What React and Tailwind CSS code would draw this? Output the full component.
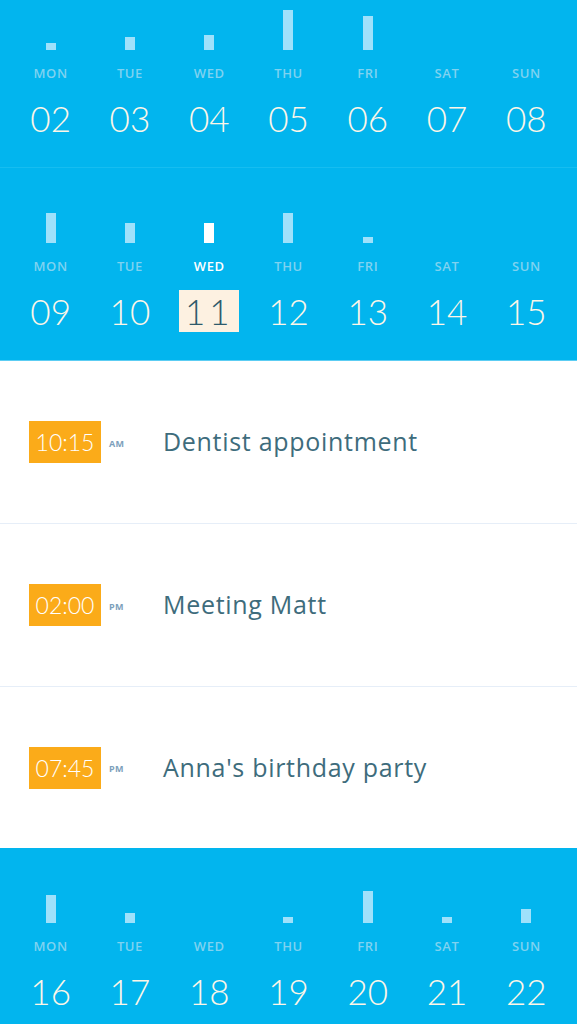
import React from 'react';

const days = ['MON', 'TUE', 'WED', 'THU', 'FRI', 'SAT', 'SUN'];

const weeks = [
    { id: 'w1', dates: ['02', '03', '04', '05', '06', '07', '08'], bars: [7, 13, 15, 40, 34, 0, 0] },
    { id: 'w2', dates: ['09', '10', '11', '12', '13', '14', '15'], bars: [30, 20, 20, 30, 6, 0, 0], selected: 2 },
    { id: 'w3', dates: ['16', '17', '18', '19', '20', '21', '22'], bars: [28, 10, 0, 6, 32, 6, 14] },
];

const events = [
    { time: '10:15', period: 'AM', title: 'Dentist appointment' },
    { time: '02:00', period: 'PM', title: 'Meeting Matt' },
    { time: '07:45', period: 'PM', title: "Anna's birthday party" },
];

const Week = ({ week, className }) => (
    <div className={`h-[193px] bg-[#02b5ee] px-[11px] pt-[35px] grid grid-cols-7 ${className}`}>
        {week.dates.map((date, i) => {
            const active = week.selected === i;
            return (
                <div key={date} className="flex flex-col items-center">
                    <div className="h-[40px] flex items-end">
                        {week.bars[i] > 0 && (
                            <div
                                className={`w-[10px] ${active ? 'bg-white' : 'bg-[#9fe1fb]'}`}
                                style={{ height: week.bars[i] }}
                            />
                        )}
                    </div>
                    <div
                        className={`mt-[15px] h-[16px] leading-[16px] text-[13px] font-semibold tracking-[0.6px] ${active ? 'text-white' : 'text-[#7fd2f0]'}`}
                        style={{ fontFamily: '"Open Sans", sans-serif' }}
                    >
                        {days[i]}
                    </div>
                    <div
                        className={`mt-[16px] h-[42px] leading-[42px] text-[35px] font-light text-center ${active ? 'w-[60px] bg-[#fdf1e1] text-[#2e5a6b] tracking-[4px]' : 'text-[#fdf6e8]'}`}
                        style={{ fontFamily: 'Lato, "Open Sans", sans-serif' }}
                    >
                        {date}
                    </div>
                </div>
            );
        })}
    </div>
);

export default function App() {
    return (
        <div className="w-[577px] h-[1024px] overflow-hidden bg-white">
            <Week week={weeks[0]} className="-mt-[25px] border-b border-[#16bdf0]" />
            <Week week={weeks[1]} className="border-b border-[#5ccdf3]" />
            <div className="bg-white">
                {events.map((ev, i) => (
                    <div
                        key={ev.time}
                        className={`flex items-center pl-[29px] ${i < events.length - 1 ? 'h-[163px] border-b border-[#e6eef8]' : 'h-[161px]'}`}
                    >
                        <div
                            className="w-[72px] h-[42px] bg-[#fbab19] text-white text-[23px] font-light leading-[42px] text-center"
                            style={{ fontFamily: 'Lato, "Open Sans", sans-serif' }}
                        >
                            {ev.time}
                        </div>
                        <div
                            className="w-[62px] pl-[8px] pt-[3px] text-[9px] font-bold tracking-[0.3px] text-[#7d9fbb]"
                            style={{ fontFamily: '"Open Sans", sans-serif' }}
                        >
                            {ev.period}
                        </div>
                        <div
                            className="text-[25px] tracking-[0.7px] text-[#3e6c7c]"
                            style={{ fontFamily: '"Open Sans", sans-serif' }}
                        >
                            {ev.title}
                        </div>
                    </div>
                ))}
            </div>
            <Week week={weeks[2]} />
        </div>
    );
}
